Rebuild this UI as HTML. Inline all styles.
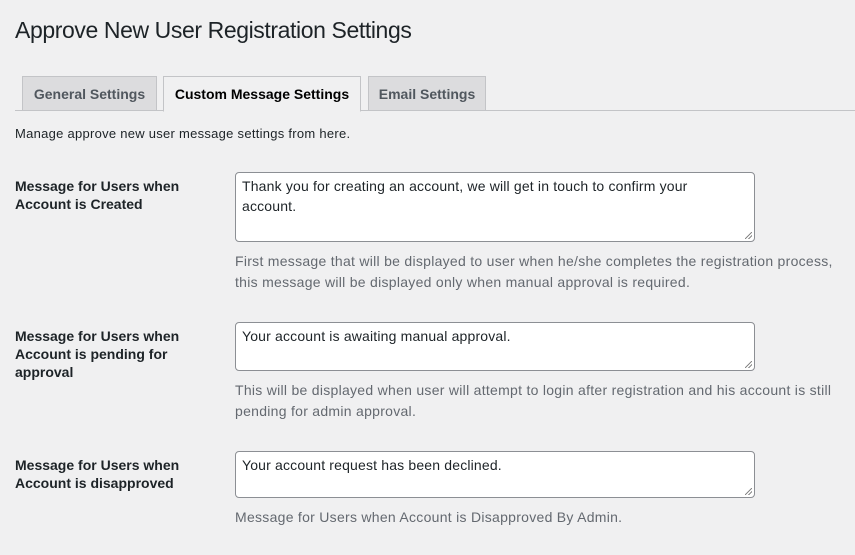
<!DOCTYPE html>
<html><head><meta charset="utf-8"><style>
*{box-sizing:border-box;margin:0;padding:0}
body{width:855px;height:555px;background:#f0f0f1;font-family:"Liberation Sans",sans-serif;color:#1d2327;position:relative;overflow:hidden}
.a{position:absolute;white-space:nowrap}
h1{position:absolute;left:15px;top:16px;font-size:23px;font-weight:400;line-height:29px;letter-spacing:-0.4px}
.line{position:absolute;left:15px;right:0;top:110px;height:1px;background:#c3c4c7}
.tab{position:absolute;top:76px;height:35px;border:1px solid #c3c4c7;background:#dcdcde;color:#50575e;font-weight:700;font-size:14px;line-height:34px;text-align:center}
.tab.on{background:#f0f0f1;color:#000;border-bottom-color:#f0f0f1;height:36px}
.lab{position:absolute;left:15px;font-size:14px;font-weight:700;line-height:18px}
.ta{position:absolute;left:235px;width:520px;background:#fff;border:1px solid #8c8f94;border-radius:4px;font-size:14px;line-height:20px;padding:3px 6px;white-space:nowrap;letter-spacing:0.17px}
.ta:after{content:"";position:absolute;right:2px;bottom:2px;width:7px;height:7px;background:linear-gradient(135deg,transparent 45%,#888 45%,#888 55%,transparent 55%,transparent 70%,#888 70%,#888 80%,transparent 80%)}
.d{position:absolute;left:235px;font-size:14px;line-height:21px;color:#646970;letter-spacing:0.28px;white-space:nowrap}
</style></head><body>
<h1>Approve New User Registration Settings</h1>
<div class="line"></div>
<div class="tab" style="left:22px;width:135px">General Settings</div>
<div class="tab on" style="left:163px;width:198px">Custom Message Settings</div>
<div class="tab" style="left:368px;width:118px">Email Settings</div>
<div class="a" style="left:15px;top:126px;font-size:13px;line-height:16px;letter-spacing:0.27px">Manage approve new user message settings from here.</div>

<div class="lab" style="top:177px">Message for Users when<br>Account is Created</div>
<div class="ta" style="top:172px;height:70px">Thank you for creating an account, we will get in touch to confirm your<br>account.</div>
<div class="d" style="top:251px">First message that will be displayed to user when he/she completes the registration process,<br>this message will be displayed only when manual approval is required.</div>

<div class="lab" style="top:327px">Message for Users when<br>Account is pending for<br>approval</div>
<div class="ta" style="top:322px;height:49px">Your account is awaiting manual approval.</div>
<div class="d" style="top:380px">This will be displayed when user will attempt to login after registration and his account is still<br>pending for admin approval.</div>

<div class="lab" style="top:456px">Message for Users when<br>Account is disapproved</div>
<div class="ta" style="top:451px;height:47px">Your account request has been declined.</div>
<div class="d" style="top:507px">Message for Users when Account is Disapproved By Admin.</div>
</body></html>
